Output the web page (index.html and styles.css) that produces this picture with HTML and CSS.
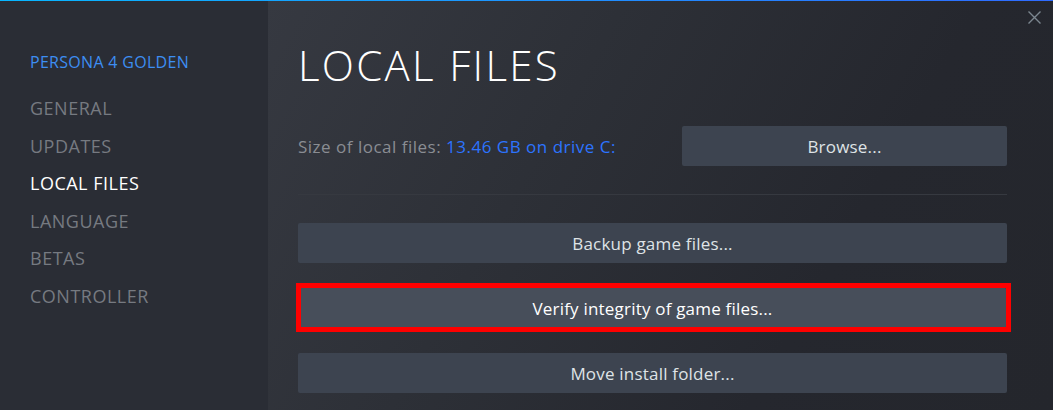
FILE: index.html
```html
<!DOCTYPE html>
<html lang="en">
<head>
<meta charset="utf-8">
<title>Local Files</title>
<link rel="stylesheet" href="styles.css">
</head>
<body>
<div class="accent"></div>
<div class="window">
  <nav class="sidebar">
    <div class="game">PERSONA 4 GOLDEN</div>
    <ul class="menu">
      <li class="item">GENERAL</li>
      <li class="item">UPDATES</li>
      <li class="item active">LOCAL FILES</li>
      <li class="item">LANGUAGE</li>
      <li class="item">BETAS</li>
      <li class="item">CONTROLLER</li>
    </ul>
  </nav>
  <main class="main">
    <button class="close" aria-label="Close">
      <svg viewBox="0 0 13 13" width="13" height="13"><path d="M0.5 0.5 L12.5 12.5 M12.5 0.5 L0.5 12.5" stroke="#7c8790" stroke-width="1.4" fill="none"/></svg>
    </button>
    <h1 class="title">LOCAL FILES</h1>
    <div class="size-row">
      <div class="size">Size of local files: <span class="size-value">13.46 GB on drive C:</span></div>
      <div class="btn btn-browse">Browse...</div>
    </div>
    <div class="sep"></div>
    <div class="actions">
      <div class="btn">Backup game files...</div>
      <div class="btn btn-hl">Verify integrity of game files...</div>
      <div class="btn">Move install folder...</div>
    </div>
  </main>
</div>
</body>
</html>
```
FILE: styles.css
```css
* { box-sizing: border-box; }
html, body {
  margin: 0;
  padding: 0;
  width: 1053px;
  height: 410px;
  overflow: hidden;
  background: #26282f;
  font-family: "Open Sans", "Noto Sans", sans-serif;
}
.accent {
  height: 1px;
  background: linear-gradient(90deg, #08b6ff 0%, #1a9cff 40%, #2f6bff 100%);
}
.window {
  display: flex;
  height: 409px;
}
.sidebar {
  width: 268px;
  flex: none;
  background: #2a2d35;
  padding: 51px 0 0 30px;
}
.game {
  color: #3d8ef2;
  font-size: 16px;
  line-height: 20px;
  letter-spacing: 0.3px;
}
.menu {
  list-style: none;
  margin: 18px 0 0;
  padding: 0;
}
.item {
  color: #767a81;
  font-size: 18px;
  line-height: 37.6px;
  letter-spacing: 0.5px;
}
.item.active { color: #ffffff; }
.main {
  position: relative;
  flex: 1;
  padding: 39px 46px 0 30px;
  background: linear-gradient(120deg, #363941 0%, #2d3037 35%, #25272e 70%, #24262c 100%);
}
.close {
  position: absolute;
  top: 9px;
  right: 11px;
  width: 15px;
  height: 15px;
  padding: 1px;
  border: 0;
  background: none;
  display: flex;
}
.title {
  margin: 0;
  color: #ffffff;
  font-weight: 300;
  font-size: 42px;
  line-height: 50px;
  letter-spacing: 2.3px;
}
.size-row {
  margin-top: 36px;
  display: flex;
  align-items: center;
  justify-content: space-between;
}
.size {
  color: #8a8d93;
  font-size: 17px;
  letter-spacing: 0.5px;
}
.size-value { color: #2c74ff; }
.btn {
  height: 40px;
  display: flex;
  align-items: center;
  justify-content: center;
  background: #3d4450;
  border-radius: 2px;
  color: #dfe3e6;
  font-size: 17px;
  letter-spacing: 0.2px;
}
.btn-browse { width: 325px; }
.sep {
  margin-top: 28px;
  height: 1px;
  background: #363940;
}
.actions {
  margin-top: 28px;
  display: flex;
  flex-direction: column;
  gap: 25px;
}
.btn-hl {
  position: relative;
  background: #474e5a;
  color: #ffffff;
}
.btn-hl::after {
  content: "";
  position: absolute;
  top: -5px;
  left: -2px;
  right: -4px;
  bottom: -4px;
  border: 5px solid #ff0000;
}
```
